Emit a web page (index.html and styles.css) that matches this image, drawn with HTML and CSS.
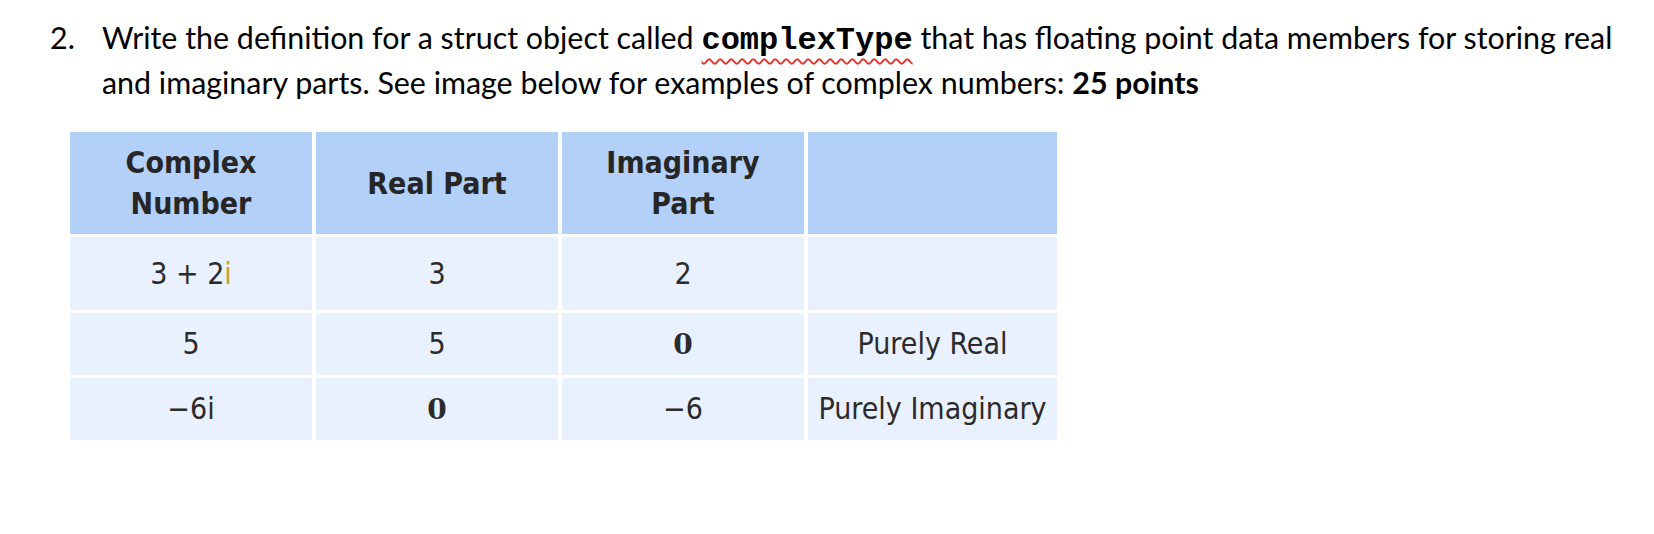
FILE: index.html
```html
<!DOCTYPE html>
<html lang="en">
<head>
<meta charset="utf-8">
<title>Complex numbers question</title>
<link rel="stylesheet" href="styles.css">
</head>
<body>
<div class="question">
  <span class="num">2.</span>
  <p class="text">Write the definition for a struct object called <code class="code">complexType</code> that has floating point data members for storing real and imaginary parts. See image below for examples of complex numbers: <strong class="pts">25 points</strong></p>
</div>
<div class="figure">
  <table class="complex">
    <colgroup>
      <col class="c1"><col class="c2"><col class="c3"><col class="c4">
    </colgroup>
    <thead>
      <tr><th>Complex Number</th><th>Real Part</th><th>Imaginary Part</th><th></th></tr>
    </thead>
    <tbody>
      <tr class="r1"><td>3 + 2<span class="imag">i</span></td><td>3</td><td>2</td><td></td></tr>
      <tr class="r2"><td>5</td><td>5</td><td><b class="zero">0</b></td><td>Purely Real</td></tr>
      <tr class="r3"><td>&minus;6i</td><td><b class="zero">0</b></td><td>&minus;6</td><td>Purely Imaginary</td></tr>
    </tbody>
  </table>
</div>
</body>
</html>
```

FILE: styles.css
```css
body {
  margin: 0;
  background: #ffffff;
  font-family: "Lato", "Liberation Sans", sans-serif;
  color: #000000;
}

.question {
  display: flex;
  padding: 15px 0 0 50px;
  font-size: 30.4px;
  line-height: 45px;
}

.num {
  flex: none;
  width: 52px;
}

.text {
  margin: 0;
  width: 1530px;
}

.code {
  font-family: "Liberation Mono", "Courier New", monospace;
  font-weight: bold;
  font-size: 32px;
  line-height: 1;
  text-decoration: underline wavy #e5322a;
  text-decoration-thickness: 1.5px;
  text-decoration-skip-ink: none;
  text-underline-offset: 9px;
}

.pts {
  font-weight: bold;
}

.figure {
  padding: 24px 0 0 66px;
}

.complex {
  border-spacing: 4px 3px;
  table-layout: fixed;
  font-family: "DejaVu Sans Condensed", "DejaVu Sans", sans-serif;
  font-size: 30px;
  color: #2b2b2b;
}

.c1, .c2, .c3 { width: 242px; }
.c4 { width: 249px; }

.complex th,
.complex td {
  padding: 0 4px;
  text-align: center;
  vertical-align: middle;
}

.complex th {
  height: 102px;
  padding: 0 14px;
  line-height: 41px;
  background: #b3d0f8;
  font-weight: bold;
  color: #262626;
}

.complex td {
  background: #e8f1fd;
  line-height: 36px;
}

.r1 td { height: 73px; }
.r2 td, .r3 td { height: 62px; }

.imag {
  color: #c9a22a;
}

.zero {
  font-family: "DejaVu Serif", "Liberation Serif", serif;
  font-weight: bold;
  font-size: 28px;
}
```
